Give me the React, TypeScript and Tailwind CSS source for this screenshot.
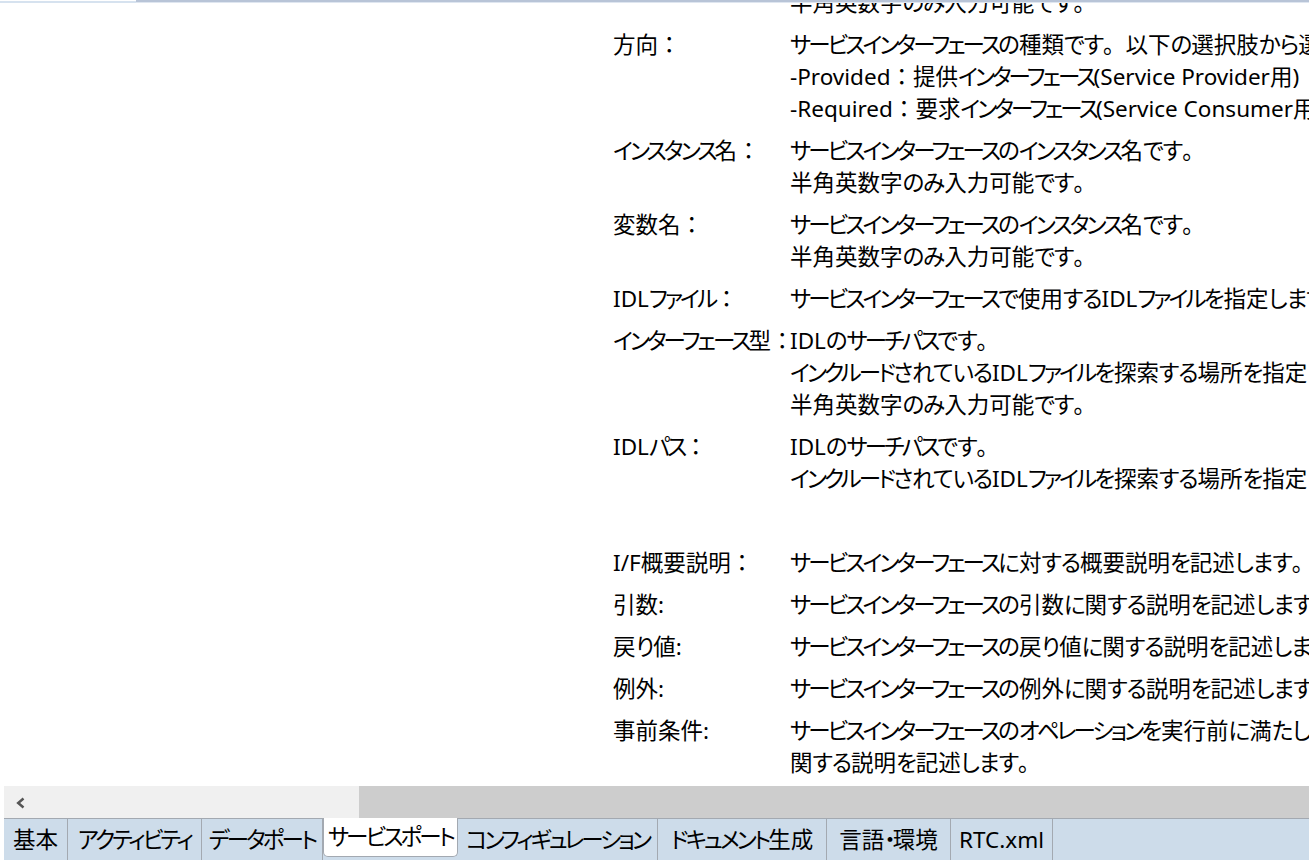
import React from "react";

const FONT = {
  fontFamily: '"Noto Sans", "Noto Sans CJK JP", sans-serif',
};

function T({ text }: { text: string }) {
  const parts = text.split(/([\u30a1-\u30ff]+|[\u3041-\u309f]+|[：。])/);
  return (
    <>
      {parts.map((p, i) => {
        if (!p) return null;
        if (p === "：" || p === "。")
          return (
            <span key={i} className="[font-feature-settings:normal]">
              {p}
            </span>
          );
        if (/^[\u30a1-\u30ff]+$/.test(p))
          return (
            <span key={i} className="tracking-[-2.9px]">
              {p}
            </span>
          );
        if (/^[\u3041-\u309f]+$/.test(p))
          return (
            <span key={i} className="tracking-[-1px]">
              {p}
            </span>
          );
        return <React.Fragment key={i}>{p}</React.Fragment>;
      })}
    </>
  );
}

const entries: { label: string; lines: string[] }[] = [
  { label: "ポート名：", lines: ["サービスポートの名前です。", "半角英数字のみ入力可能です。"] },
  {
    label: "方向：",
    lines: [
      "サービスインターフェースの種類です。以下の選択肢から選択します。",
      "-Provided：提供インターフェース(Service Provider用)",
      "-Required：要求インターフェース(Service Consumer用)",
    ],
  },
  { label: "インスタンス名：", lines: ["サービスインターフェースのインスタンス名です。", "半角英数字のみ入力可能です。"] },
  { label: "変数名：", lines: ["サービスインターフェースのインスタンス名です。", "半角英数字のみ入力可能です。"] },
  { label: "IDLファイル：", lines: ["サービスインターフェースで使用するIDLファイルを指定します。"] },
  {
    label: "インターフェース型：",
    lines: [
      "IDLのサーチパスです。",
      "インクルードされているIDLファイルを探索する場所を指定します。",
      "半角英数字のみ入力可能です。",
    ],
  },
  { label: "IDLパス：", lines: ["IDLのサーチパスです。", "インクルードされているIDLファイルを探索する場所を指定します。"] },
  { label: "", lines: [""] },
  { label: "I/F概要説明：", lines: ["サービスインターフェースに対する概要説明を記述します。"] },
  { label: "引数:", lines: ["サービスインターフェースの引数に関する説明を記述します。"] },
  { label: "戻り値:", lines: ["サービスインターフェースの戻り値に関する説明を記述します。"] },
  { label: "例外:", lines: ["サービスインターフェースの例外に関する説明を記述します。"] },
  {
    label: "事前条件:",
    lines: ["サービスインターフェースのオペレーションを実行前に満たしているべき前提条件に", "関する説明を記述します。"],
  },
  { label: "事後条件:", lines: ["サービスインターフェースのオペレーションを実行後に満たしているべき条件に", "関する説明を記述します。"] },
];

const tabs: { label: string; w: string; active?: boolean }[] = [
  { label: "基本", w: "w-[64px]" },
  { label: "アクティビティ", w: "w-[134px]" },
  { label: "データポート", w: "w-[121px]" },
  { label: "サービスポート", w: "w-[135px]", active: true },
  { label: "コンフィギュレーション", w: "w-[200px]" },
  { label: "ドキュメント生成", w: "w-[169px]" },
  { label: "言語・環境", w: "w-[124px]" },
  { label: "RTC.xml", w: "w-[102px]" },
];

export default function App() {
  return (
    <div
      className="flex h-[860px] w-full flex-col overflow-hidden bg-white text-black [font-feature-settings:'palt']"
      style={FONT}
    >
      {/* top edge */}
      <div className="flex h-[3px] shrink-0">
        <div className="w-[136px] border-b-2 border-[#d6e2ef] bg-white" />
        <div className="flex-1 border-b border-[#dfe6f0] bg-[#b8c4d7]" />
      </div>

      {/* scrolled content */}
      <div className="relative h-[783px] shrink-0 overflow-hidden">
        <div className="mt-[-48px] grid grid-cols-[177px_max-content] gap-y-[10px] pl-[613px] text-[22.5px] leading-[32px] whitespace-nowrap">
          {entries.map((e, i) => (
            <React.Fragment key={i}>
              <div className="h-full">
                <T text={e.label} />
              </div>
              <div className="flex flex-col">
                {e.lines.map((l, j) => (
                  <div key={j} className="h-[32px]">
                    <T text={l} />
                  </div>
                ))}
              </div>
            </React.Fragment>
          ))}
        </div>
      </div>

      {/* horizontal scrollbar */}
      <div className="flex h-[32px] shrink-0 pl-[4px]">
        <div className="flex w-[355px] items-center bg-[#f0f0f0] pl-[12px]">
          <svg width="11" height="14" viewBox="0 0 11 14" className="mt-[2px]">
            <path d="M7.5 2.5 L2.2 7 L7.5 11.5" fill="none" stroke="#555555" strokeWidth="2.5" />
          </svg>
        </div>
        <div className="flex-1 bg-[#cdcdcd]" />
      </div>

      {/* tabs */}
      <div className="flex h-[42px] shrink-0 pl-[4px]">
        <div className="flex flex-1 border-t border-[#a3a9b1] bg-[#cddcea]">
          {tabs.map((t) =>
            t.active ? (
              <div
                key={t.label}
                className={`${t.w} -mt-px flex h-[39px] shrink-0 items-center justify-center whitespace-nowrap rounded-b-[5px] border-x border-b border-[#a3a9b1] bg-white text-[22.5px]`}
              >
                <T text={t.label} />
              </div>
            ) : (
              <div
                key={t.label}
                className={`${t.w} flex h-full shrink-0 items-center justify-center whitespace-nowrap border-r border-[#a3a9b1] text-[22.5px]`}
              >
                <T text={t.label} />
              </div>
            )
          )}
        </div>
      </div>
    </div>
  );
}
